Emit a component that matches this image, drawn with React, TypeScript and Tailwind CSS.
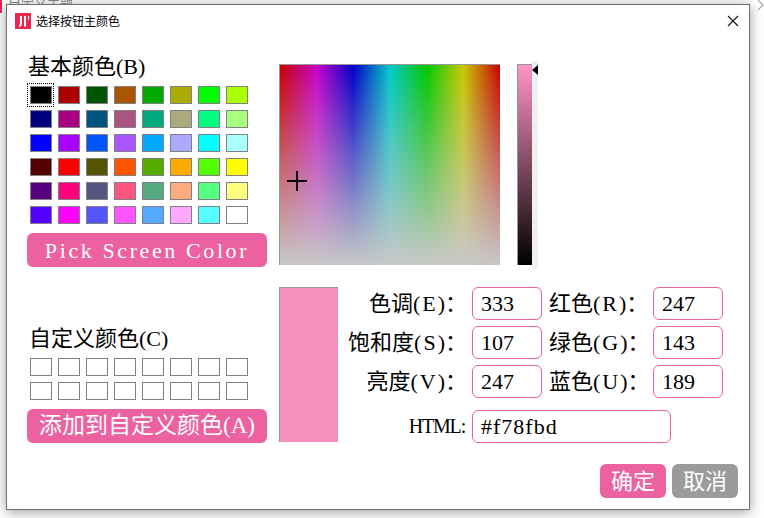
const BASIC_COLORS = [
  "#000000", "#aa0000", "#005500", "#aa5500", "#00aa00", "#aaaa00", "#00ff00", "#aaff00",
  "#00007f", "#aa007f", "#00557f", "#aa557f", "#00aa7f", "#aaaa7f", "#00ff7f", "#aaff7f",
  "#0000ff", "#aa00ff", "#0055ff", "#aa55ff", "#00aaff", "#aaaaff", "#00ffff", "#aaffff",
  "#550000", "#ff0000", "#555500", "#ff5500", "#55aa00", "#ffaa00", "#55ff00", "#ffff00",
  "#55007f", "#ff007f", "#55557f", "#ff557f", "#55aa7f", "#ffaa7f", "#55ff7f", "#ffff7f",
  "#5500ff", "#ff00ff", "#5555ff", "#ff55ff", "#55aaff", "#ffaaff", "#55ffff", "#ffffff",
];

const FIELDS = [
  ["色调", "(E)", "333", "红色", "(R)", "247"],
  ["饱和度", "(S)", "107", "绿色", "(G)", "143"],
  ["亮度", "(V)", "247", "蓝色", "(U)", "189"],
];

const SERIF = "font-['Liberation_Serif','Noto_Sans_CJK_SC',serif]";

function Swatch({ color }: { color: string }) {
  return (
    <div className="h-[18px] w-[22px] border border-[#808086]" style={{ backgroundColor: color }} />
  );
}

function Field({ value }: { value: string }) {
  return (
    <input
      readOnly
      value={value}
      className="h-[33px] w-[70px] rounded-[6px] border border-[#ec619f] bg-white pl-[8px] text-[22px] text-black outline-none"
    />
  );
}

function Label({ name, mnemonic }: { name: string; mnemonic: string }) {
  return (
    <>
      {name}
      <span className="tracking-[2px]">{mnemonic}</span>
      <span className="ml-[-2px]">：</span>
    </>
  );
}

export default function App() {
  return (
    <div className={`relative h-[518px] w-[764px] overflow-hidden bg-white ${SERIF}`}>
      {/* page behind the dialog */}
      <div className="absolute left-0 top-0 h-[13px] w-[2px] bg-[#e8264f]" />
      <div className="absolute left-[8px] top-[-7px] font-['Noto_Sans_CJK_SC',sans-serif] text-[13px] text-[#888]">
        自定义主题
      </div>
      <svg className="absolute left-[757px] top-0" width="7" height="11" viewBox="0 0 7 11" fill="none">
        <path d="M1 0l5 5-5 5" stroke="#aaa" strokeWidth="1.2" />
      </svg>

      <div className="absolute left-[6px] top-[4px] flex h-[506px] w-[744px] flex-col border border-[#707070] bg-white shadow-[0_2px_12px_rgba(0,0,0,0.4)]">
        {/* title bar */}
        <div className="flex h-[31px] shrink-0 items-center pl-[8px] pr-[10px] pt-[1px]">
          <svg width="16" height="16" viewBox="0 0 16 16">
            <rect width="16" height="16" fill="#e8264f" />
            <path d="M5 3h2v7q0 2-1.500 3.500H3.600Q5 12 5 10zM9 3h2v10.500H9zM13 3h1.200l-.4 4H13z" fill="#fff" />
          </svg>
          <span className="ml-[5px] font-['Noto_Sans_CJK_SC',sans-serif] text-[12px] text-black">选择按钮主颜色</span>
          <svg className="ml-auto" width="12" height="12" viewBox="0 0 12 12" fill="none">
            <path d="M1 1l10 10M11 1L1 11" stroke="#111" strokeWidth="1.1" />
          </svg>
        </div>

        {/* colour pickers */}
        <div className="flex pl-[20px] pt-[19px]">
          <div className="h-[212px] w-[240px]">
            <div className="h-[31px] pl-[1px] text-[22px] leading-[24px] text-black">基本颜色(B)</div>
            <div className="relative grid grid-cols-[repeat(8,22px)] gap-[6px] pl-[3px]">
              <div className="absolute left-[0px] top-[-3px] h-[24px] w-[27px] border border-dotted border-black" />
              {BASIC_COLORS.map((c, i) => (
                <Swatch key={i} color={c} />
              ))}
            </div>
            <button className="mt-[9px] h-[34px] w-[240px] rounded-[6px] bg-[#ec619f] text-[22px] tracking-[2.6px] text-white">
              Pick Screen Color
            </button>
          </div>

          <div className="relative ml-[12px] mt-[9px] h-[201px] w-[221px] border-l border-t border-[#999] bg-[linear-gradient(to_right,#c80000,#c800c8,#0000c8,#00c8c8,#00c800,#c8c800,#c80000)]">
            <div className="h-full w-full bg-[linear-gradient(to_bottom,transparent,#c8c8c8)]" />
            <svg className="absolute left-[7px] top-[106px]" width="20" height="20" viewBox="0 0 20 20">
              <path d="M0 10h20M10 0v20" stroke="#000" strokeWidth="2" />
            </svg>
          </div>

          <div className="ml-[17px] mt-[9px] h-[201px] w-[15px] border-l border-t border-[#999] bg-[linear-gradient(to_bottom,#ff94c5,#000000)]" />
          <div className="relative mt-[6px] h-[208px] w-[6px] bg-[#f0f0f0]">
            <div className="absolute left-0 top-[4px] h-[10px] w-[6px] bg-black [clip-path:polygon(0_50%,100%_0,100%_100%)]" />
          </div>
        </div>

        {/* custom colours and values */}
        <div className="mt-[18px] flex pl-[20px]">
          <div className="flex h-[156px] w-[240px] flex-col justify-end">
            <div className="h-[30px] pl-[2px] text-[22px] leading-[22px] text-black">自定义颜色(C)</div>
            <div className="grid grid-cols-[repeat(8,22px)] gap-[6px] pl-[3px]">
              {Array.from({ length: 16 }, (_, i) => (
                <Swatch key={i} color="#ffffff" />
              ))}
            </div>
            <button className="mt-[9px] h-[34px] w-[240px] rounded-[6px] bg-[#ec619f] text-[23px] text-white">
              添加到自定义颜色(A)
            </button>
          </div>

          <div className="ml-[12px] h-[155px] w-[59px] border-l border-t border-[#999] bg-[#f78fbd]" />

          <div className="flex flex-col">
            <div className="grid grid-cols-[134px_70px_111px_70px] items-center gap-y-[6px] text-[22px] text-black">
              {FIELDS.map(([n1, m1, v1, n2, m2, v2]) => (
                <div key={n1} className="contents">
                  <div className="whitespace-nowrap pr-[5px] text-right leading-[33px]">
                    <Label name={n1} mnemonic={m1} />
                  </div>
                  <Field value={v1} />
                  <div className="whitespace-nowrap pl-[7px] leading-[33px]">
                    <Label name={n2} mnemonic={m2} />
                  </div>
                  <Field value={v2} />
                </div>
              ))}
            </div>
            <div className="mt-[12px] flex items-center text-black">
              <div className="w-[134px] pr-[7px] text-right text-[20px] leading-[33px] tracking-[-1.200px]">HTML:</div>
              <input
                readOnly
                value="#f78fbd"
                className="h-[33px] w-[199px] rounded-[6px] border border-[#ec619f] bg-white pl-[8px] text-[22px] tracking-[1px] text-black outline-none"
              />
            </div>
          </div>
        </div>

        {/* dialog buttons */}
        <div className="mt-[21px] flex justify-end gap-[6px] pr-[11px]">
          <button className="h-[34px] w-[66px] rounded-[6px] bg-[#ec619f] text-[22px] text-white">确定</button>
          <button className="h-[34px] w-[66px] rounded-[6px] bg-[#9b9b9b] text-[22px] text-white">取消</button>
        </div>
      </div>
    </div>
  );
}
